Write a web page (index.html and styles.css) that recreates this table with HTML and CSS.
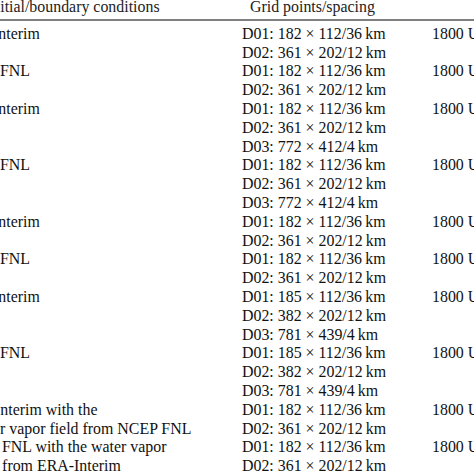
FILE: index.html
```html
<!DOCTYPE html>
<html>
<head>
<meta charset="utf-8">
<link rel="stylesheet" href="styles.css">
</head>
<body>
<div class="page">
  <div class="head">
    <div class="h1">Initial/boundary conditions</div>
    <div class="h2">Grid points/spacing</div>
    <div class="h3"></div>
  </div>
  <hr class="rule">
  <div class="body">
    <div class="c1">ERA-Interim</div><div class="c2">D01: 182 × 112/36&#8201;km</div><div class="c3">1800 UTC</div>
    <div class="c1"></div><div class="c2">D02: 361 × 202/12&#8201;km</div><div class="c3"></div>
    <div class="c1">NCEP FNL</div><div class="c2">D01: 182 × 112/36&#8201;km</div><div class="c3">1800 UTC</div>
    <div class="c1"></div><div class="c2">D02: 361 × 202/12&#8201;km</div><div class="c3"></div>
    <div class="c1">ERA-Interim</div><div class="c2">D01: 182 × 112/36&#8201;km</div><div class="c3">1800 UTC</div>
    <div class="c1"></div><div class="c2">D02: 361 × 202/12&#8201;km</div><div class="c3"></div>
    <div class="c1"></div><div class="c2">D03: 772 × 412/4&#8201;km</div><div class="c3"></div>
    <div class="c1">NCEP FNL</div><div class="c2">D01: 182 × 112/36&#8201;km</div><div class="c3">1800 UTC</div>
    <div class="c1"></div><div class="c2">D02: 361 × 202/12&#8201;km</div><div class="c3"></div>
    <div class="c1"></div><div class="c2">D03: 772 × 412/4&#8201;km</div><div class="c3"></div>
    <div class="c1">ERA-Interim</div><div class="c2">D01: 182 × 112/36&#8201;km</div><div class="c3">1800 UTC</div>
    <div class="c1"></div><div class="c2">D02: 361 × 202/12&#8201;km</div><div class="c3"></div>
    <div class="c1">NCEP FNL</div><div class="c2">D01: 182 × 112/36&#8201;km</div><div class="c3">1800 UTC</div>
    <div class="c1"></div><div class="c2">D02: 361 × 202/12&#8201;km</div><div class="c3"></div>
    <div class="c1">ERA-Interim</div><div class="c2">D01: 185 × 112/36&#8201;km</div><div class="c3">1800 UTC</div>
    <div class="c1"></div><div class="c2">D02: 382 × 202/12&#8201;km</div><div class="c3"></div>
    <div class="c1"></div><div class="c2">D03: 781 × 439/4&#8201;km</div><div class="c3"></div>
    <div class="c1">NCEP FNL</div><div class="c2">D01: 185 × 112/36&#8201;km</div><div class="c3">1800 UTC</div>
    <div class="c1"></div><div class="c2">D02: 382 × 202/12&#8201;km</div><div class="c3"></div>
    <div class="c1"></div><div class="c2">D03: 781 × 439/4&#8201;km</div><div class="c3"></div>
    <div class="c1 lead">ERA-Interim with the</div><div class="c2">D01: 182 × 112/36&#8201;km</div><div class="c3">1800 UTC</div>
    <div class="c1 cont">water vapor field from NCEP FNL</div><div class="c2">D02: 361 × 202/12&#8201;km</div><div class="c3"></div>
    <div class="c1 lead">NCEP FNL with the water vapor</div><div class="c2">D01: 182 × 112/36&#8201;km</div><div class="c3">1800 UTC</div>
    <div class="c1 cont2">field from ERA-Interim</div><div class="c2">D02: 361 × 202/12&#8201;km</div><div class="c3"></div>
  </div>
</div>
</body>
</html>
```

FILE: styles.css
```css
html, body {
  margin: 0;
  padding: 0;
  background: #ffffff;
  overflow: hidden;
}

.page {
  width: 720px;
  margin-left: -44px;
  margin-top: -2px;
  font-family: "Liberation Serif", "Times New Roman", serif;
  font-size: 15.9px;
  line-height: 18.8px;
  color: #111111;
  white-space: nowrap;
}

.head {
  display: grid;
  grid-template-columns: 286px 190px 244px;
  padding-bottom: 2px;
  color: #222222;
}

.rule {
  display: block;
  margin: 0;
  border: 0;
  border-top: 2px solid #808080;
  height: 0;
}

.body {
  display: grid;
  grid-template-columns: 286px 190px 244px;
  padding-top: 4px;
}

.h1 {
  padding-left: 31px;
}

.h2 {
  padding-left: 8px;
}

.c1, .c2, .c3 {
  height: 18.8px;
}

.lead {
  padding-left: 2px;
}

.cont {
  padding-left: 14px;
}

.cont2 {
  padding-left: 13px;
}
```
